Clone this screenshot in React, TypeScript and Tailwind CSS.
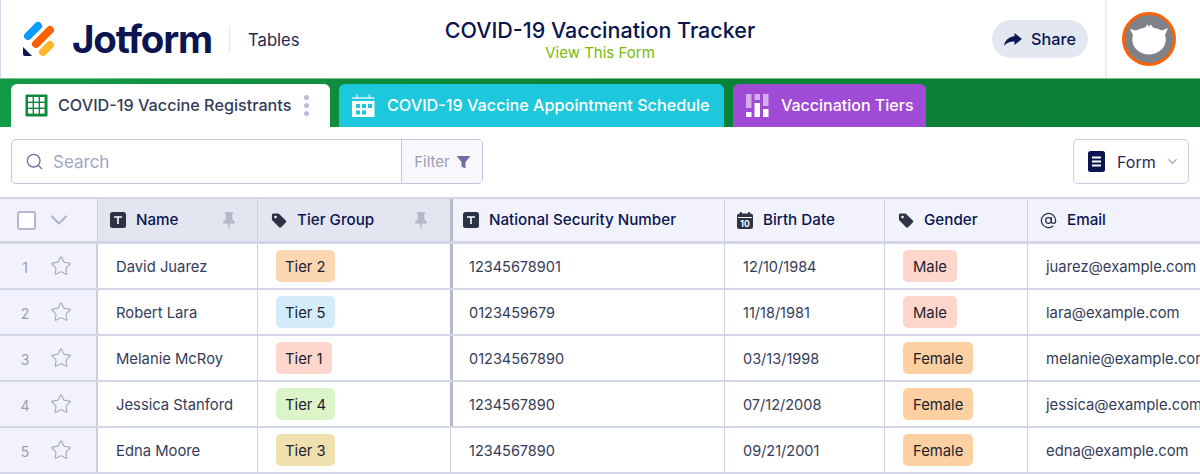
import { Search, ChevronDown, Star, AtSign } from 'lucide-react'
import type { ReactNode } from 'react'

function LogoMark() {
  return (
    <svg width="32" height="36" viewBox="0 0 32 36" className="shrink-0">
      <line x1="5" y1="15" x2="15" y2="5" stroke="#0a9cff" strokeWidth="8" strokeLinecap="round" />
      <line x1="13" y1="23" x2="27" y2="9" stroke="#ff6100" strokeWidth="8" strokeLinecap="round" />
      <line x1="20" y1="31" x2="27" y2="24" stroke="#ffb629" strokeWidth="8" strokeLinecap="round" />
      <path d="M0 26 L9 35 H2 A2 2 0 0 1 0 33 Z" fill="#0a1551" />
    </svg>
  )
}

function GridIcon() {
  return (
    <svg width="23" height="23" viewBox="0 0 23 23">
      <rect x="0.5" y="0.5" width="22" height="22" rx="1" fill="#0a8a3a" />
      {[3, 9, 15].flatMap((y) =>
        [3, 9, 15].map((x) => <rect key={`${x}-${y}`} x={x} y={y} width="4.6" height="4.6" fill="#fff" />),
      )}
    </svg>
  )
}

function CalendarIcon() {
  return (
    <svg width="23" height="24" viewBox="0 0 23 24">
      <path d="M0 3h22.5v2H0z" fill="#fff" opacity="0.6" />
      <rect x="4" y="0.5" width="2" height="4" fill="#fff" opacity="0.6" />
      <rect x="16.5" y="0.5" width="2" height="4" fill="#fff" opacity="0.6" />
      <path d="M0 7h22.5v15a1 1 0 0 1-1 1H1a1 1 0 0 1-1-1z" fill="#fff" />
      <rect x="4" y="10" width="4" height="4" fill="#1dc8dc" />
      <rect x="10" y="10" width="4" height="4" fill="#1dc8dc" />
      <rect x="16" y="10" width="4" height="4" fill="#1dc8dc" />
      <rect x="4" y="16.5" width="4" height="4" fill="#1dc8dc" />
      <rect x="10" y="16.5" width="4" height="4" fill="#1dc8dc" />
    </svg>
  )
}

function BarsIcon() {
  return (
    <svg width="23" height="23" viewBox="0 0 23 23" fill="#fff">
      <rect x="0" y="0" width="5.5" height="14" opacity="0.55" />
      <rect x="0" y="18" width="5.5" height="5" />
      <rect x="8.5" y="0" width="5.5" height="6" opacity="0.55" />
      <rect x="8.5" y="9" width="5.5" height="14" />
      <rect x="17" y="0" width="5.5" height="12" opacity="0.55" />
      <rect x="17" y="15" width="5.5" height="8" />
    </svg>
  )
}

function TextIcon() {
  return (
    <svg width="16" height="16" viewBox="0 0 16 16">
      <rect width="16" height="16" rx="2.5" fill="#2c3345" />
      <path d="M4 4.2h8v1.5H8.8v6.3H7.2V5.7H4z" fill="#fff" />
    </svg>
  )
}

function TagIcon() {
  return (
    <svg width="17" height="17" viewBox="0 0 17 17">
      <path
        d="M1 2.6C1 1.7 1.7 1 2.6 1h5c.4 0 .8.2 1.1.5l7 7c.6.6.6 1.6 0 2.2l-4.9 4.9c-.6.6-1.6.6-2.2 0l-7-7C1.2 8.300 1 7.900 1 7.500z"
        fill="#2c3345"
      />
      <circle cx="4.800" cy="4.800" r="1.400" fill="#fff" />
    </svg>
  )
}

function BirthIcon() {
  return (
    <svg width="16" height="17" viewBox="0 0 16 17">
      <rect y="1.500" width="16" height="15.500" rx="2.500" fill="#2c3345" />
      <rect x="3" width="1.800" height="3.500" fill="#2c3345" />
      <rect x="11.200" width="1.800" height="3.500" fill="#2c3345" />
      <rect x="1" y="5" width="14" height="1" fill="#fff" />
      <text x="8" y="14.500" textAnchor="middle" fontSize="8.500" fontWeight="700" fill="#fff">
        10
      </text>
    </svg>
  )
}

function PinIcon() {
  return (
    <svg width="12" height="16" viewBox="0 0 12 16" fill="#b3b8c9">
      <path d="M2 0h8v1.500L9 2.500 9.600 7.500 12 10v1.500H7L6.500 16h-1L5 11.500H0V10l2.400-2.500L3 2.500 2 1.500z" />
    </svg>
  )
}

function FunnelIcon() {
  return (
    <svg width="13" height="12" viewBox="0 0 13 12" fill="#6c6fa5">
      <path d="M0.500 0h12a.5.5 0 0 1 .4.800L8.500 6v5a1 1 0 0 1-1.400.9L5.300 11a1 1 0 0 1-.8-1V6L.1.800A.5.5 0 0 1 .5 0z" />
    </svg>
  )
}

function FormIcon() {
  return (
    <svg width="17" height="21" viewBox="0 0 17 21">
      <rect width="17" height="21" rx="2.500" fill="#0a1551" />
      <rect x="4" y="5.500" width="9" height="2" fill="#fff" />
      <rect x="4" y="9.500" width="9" height="2" fill="#fff" />
      <rect x="4" y="13.500" width="9" height="2" fill="#fff" />
    </svg>
  )
}

function ShareIcon() {
  return (
    <svg width="18" height="13" viewBox="0 0 18 13" fill="#0a1551">
      <path d="M10.500 0 18 6l-7.500 6V8.500C6 8.500 3 9.500 0 13c.8-5.500 4.500-9.200 10.500-9.800z" />
    </svg>
  )
}

function CatAvatar() {
  return (
    <div className="w-[54px] h-[54px] rounded-full bg-[#7f8289] border-[3px] border-[#ff6100] flex items-center justify-center">
      <svg width="38" height="31" viewBox="0 0 38 31" fill="#fff">
        <path d="M0 5 L6 6.500 C9 5 12 4 15 3.500 L17.500 0.500 L19 2.500 L21 0.500 L23 3.500 C26 4 29 5 32 6.500 L38 4 L35 11 C36 14 36 17 35 20 C33 26 26 30.500 19 30.500 C12 30.500 5 26 3 20 C2 17 2 14 3 11 Z" />
      </svg>
    </div>
  )
}

type Row = {
  name: string
  tier: string
  tierColor: string
  nsn: string
  birth: string
  gender: string
  genderColor: string
  email: string
}

const rows: Row[] = [
  { name: 'David Juarez', tier: 'Tier 2', tierColor: 'bg-[#fad6b1]', nsn: '12345678901', birth: '12/10/1984', gender: 'Male', genderColor: 'bg-[#ffd6cc]', email: 'juarez@example.com' },
  { name: 'Robert Lara', tier: 'Tier 5', tierColor: 'bg-[#d4ecfa]', nsn: '0123459679', birth: '11/18/1981', gender: 'Male', genderColor: 'bg-[#ffd6cc]', email: 'lara@example.com' },
  { name: 'Melanie McRoy', tier: 'Tier 1', tierColor: 'bg-[#ffd6cc]', nsn: '01234567890', birth: '03/13/1998', gender: 'Female', genderColor: 'bg-[#fdd0a2]', email: 'melanie@example.com' },
  { name: 'Jessica Stanford', tier: 'Tier 4', tierColor: 'bg-[#dbf5c8]', nsn: '1234567890', birth: '07/12/2008', gender: 'Female', genderColor: 'bg-[#fdd0a2]', email: 'jessica@example.com' },
  { name: 'Edna Moore', tier: 'Tier 3', tierColor: 'bg-[#f0e0ae]', nsn: '1234567890', birth: '09/21/2001', gender: 'Female', genderColor: 'bg-[#fdd0a2]', email: 'edna@example.com' },
]

function HeaderCell({ icon, label, className, pinned }: { icon: ReactNode; label: string; className: string; pinned?: boolean }) {
  return (
    <div className={`h-full flex items-center shrink-0 border-r border-[#ccd0e0] ${className}`}>
      <span className="w-[16px] flex justify-center shrink-0">{icon}</span>
      <span className="ml-[10px] text-[15.200px] font-medium text-[#0a1551] whitespace-nowrap">{label}</span>
      {pinned && (
        <span className="ml-auto">
          <PinIcon />
        </span>
      )}
    </div>
  )
}

export default function App() {
  return (
    <div className="w-[1200px] h-[474px] overflow-hidden bg-white font-['Inter',sans-serif]">
      <header className="h-[79px] flex items-center border-l border-[#d5d8ee] border-b border-b-[#7fc08f]">
        <div className="w-[439px] shrink-0 flex items-center pl-[22px]">
          <LogoMark />
          <span className="ml-[17px] text-[38.500px] leading-none font-bold tracking-[-0.03em] text-[#0a1551]">Jotform</span>
          <span className="ml-[17px] h-[27px] w-px bg-[#e3e5f0]" />
          <span className="ml-[18px] pt-[3px] text-[16.600px] text-[#1f2a55]">Tables</span>
        </div>
        <div className="w-[320px] shrink-0 flex flex-col items-center pt-[1px]">
          <span className="text-[21.500px] leading-[26px] font-medium text-[#0a1551] whitespace-nowrap">COVID-19 Vaccination Tracker</span>
          <span className="text-[15px] leading-[19px] text-[#78bb07]">View This Form</span>
        </div>
        <div className="ml-auto flex items-center h-full">
          <button className="h-[38px] w-[96px] rounded-full bg-[#e3e7f2] flex items-center justify-center gap-[9px] text-[16.200px] font-medium text-[#0a1551]">
            <ShareIcon />
            Share
          </button>
          <div className="ml-[17px] h-full w-[95px] border-l-2 border-[#ebecf4] flex items-center pl-[15px]">
            <CatAvatar />
          </div>
        </div>
      </header>

      <nav className="h-[48px] flex items-end gap-[9px] pl-[11px] bg-gradient-to-r from-[#139a45] via-[#0b8336] to-[#0a8135]">
        <div className="h-[43px] w-[319px] rounded-t-[6px] bg-white flex items-center pl-[14px] pr-[21px]">
          <GridIcon />
          <span className="ml-[10px] pb-[1px] text-[16.200px] font-medium text-[#343c58] whitespace-nowrap">COVID-19 Vaccine Registrants</span>
          <span className="ml-auto flex flex-col gap-[3px]">
            <span className="w-[5px] h-[5px] rounded-full bg-[#b9bcd0]" />
            <span className="w-[5px] h-[5px] rounded-full bg-[#b9bcd0]" />
            <span className="w-[5px] h-[5px] rounded-full bg-[#b9bcd0]" />
          </span>
        </div>
        <div className="h-[43px] w-[385px] rounded-t-[6px] bg-[#1dc8dc] flex items-center pl-[13px]">
          <CalendarIcon />
          <span className="ml-[12px] pb-[1px] text-[16.200px] font-medium text-white whitespace-nowrap">COVID-19 Vaccine Appointment Schedule</span>
        </div>
        <div className="h-[43px] w-[193px] rounded-t-[6px] bg-[#9f4bd6] flex items-center pl-[13px]">
          <BarsIcon />
          <span className="ml-[12px] pb-[1px] text-[16px] font-medium text-white whitespace-nowrap">Vaccination Tiers</span>
        </div>
      </nav>

      <div className="h-[70px] flex items-center justify-between pl-[11px] pr-[11px] pb-[1px]">
        <div className="h-[45px] w-[472px] rounded-[5px] border border-[#c2c5dc] flex overflow-hidden">
          <div className="flex-1 flex items-center pl-[13px]">
            <Search size={19} strokeWidth={1.7} className="text-[#6c6f9c]" />
            <span className="ml-[9px] pt-[2px] text-[17px] text-[#a3a6c2]">Search</span>
          </div>
          <div className="w-[81px] border-l border-[#c2c5dc] bg-[#f8f8fc] flex items-center justify-center gap-[7px]">
            <span className="pt-[2px] text-[15px] text-[#9a9db9]">Filter</span>
            <FunnelIcon />
          </div>
        </div>
        <div className="h-[45px] w-[116px] rounded-[5px] border border-[#c9cce2] flex items-center pl-[14px]">
          <FormIcon />
          <span className="ml-[12px] text-[16px] text-[#1f2a55]">Form</span>
          <ChevronDown size={15} strokeWidth={2} className="ml-[9px] text-[#9a9db9]" />
        </div>
      </div>

      <div className="text-[14.800px] text-[#343c58]">
        <div className="h-[47px] flex items-center border-t-2 border-b-[3px] border-[#d3d6e6] bg-[#f1f2fb]">
          <div className="w-[98px] h-full shrink-0 flex items-center pl-[17px] border-r border-[#ccd0e0]">
            <span className="w-[19px] h-[19px] rounded-[3px] border-2 border-[#b5b8cc] bg-white" />
            <ChevronDown size={28} strokeWidth={1.900} className="ml-[9px] text-[#b5b8cc]" />
          </div>
          <HeaderCell icon={<TextIcon />} label="Name" pinned className="w-[160px] pl-[12px] pr-[22px] bg-[#e3e5f0]" />
          <HeaderCell icon={<TagIcon />} label="Tier Group" pinned className="w-[195px] pl-[13px] pr-[23px] bg-[#e3e5f0] border-r-[3px] border-r-[#b5bacd]" />
          <HeaderCell icon={<TextIcon />} label="National Security Number" className="w-[272px] pl-[10px]" />
          <HeaderCell icon={<BirthIcon />} label="Birth Date" className="w-[160px] pl-[12px]" />
          <HeaderCell icon={<TagIcon />} label="Gender" className="w-[143px] pl-[13px]" />
          <div className="h-full flex-1 flex items-center pl-[12px]">
            <AtSign size={17} strokeWidth={1.800} className="text-[#2c3345]" />
            <span className="ml-[10px] text-[15.200px] font-medium text-[#0a1551]">Email</span>
          </div>
        </div>
        {rows.map((row, i) => (
          <div key={row.name} className="h-[46px] flex items-center border-b-2 border-[#d3d6e6]">
            <div className="w-[98px] h-full shrink-0 flex items-center bg-[#f1f2fb] border-r-2 border-[#ccd0e0]">
              <span className="w-[50px] pt-[2px] text-center text-[14px] text-[#9a9db4]">{i + 1}</span>
              <Star size={22} strokeWidth={1.300} className="text-[#a9adc0]" />
            </div>
            <div className="w-[160px] h-full shrink-0 flex items-center pl-[18px] pt-[2px] border-r border-[#ccd0e0]">{row.name}</div>
            <div
              className={`h-full shrink-0 flex items-center pl-[18px] ${
                i < 4 ? 'w-[195px] border-r-[3px] border-[#b5bacd]' : 'w-[193px] border-r border-[#ccd0e0]'
              }`}
            >
              <span className={`h-[32px] px-[9px] pt-[2px] rounded-[5px] flex items-center text-[#1b1f2e] ${row.tierColor}`}>{row.tier}</span>
            </div>
            <div
              className={`h-full shrink-0 flex items-center pt-[2px] text-[14.500px] border-r border-[#ccd0e0] ${
                i < 4 ? 'w-[272px] pl-[16px]' : 'w-[274px] pl-[18px]'
              }`}
            >
              {row.nsn}
            </div>
            <div className="w-[160px] h-full shrink-0 flex items-center pl-[18px] pt-[2px] text-[14.500px] border-r border-[#ccd0e0]">{row.birth}</div>
            <div className="w-[143px] h-full shrink-0 flex items-center pl-[18px] border-r border-[#ccd0e0]">
              <span className={`h-[32px] px-[10px] pt-[2px] rounded-[5px] flex items-center text-[#1b1f2e] ${row.genderColor}`}>{row.gender}</span>
            </div>
            <div className="flex-1 h-full flex items-center pl-[18px] pt-[2px] whitespace-nowrap overflow-hidden">{row.email}</div>
          </div>
        ))}
      </div>
    </div>
  )
}
